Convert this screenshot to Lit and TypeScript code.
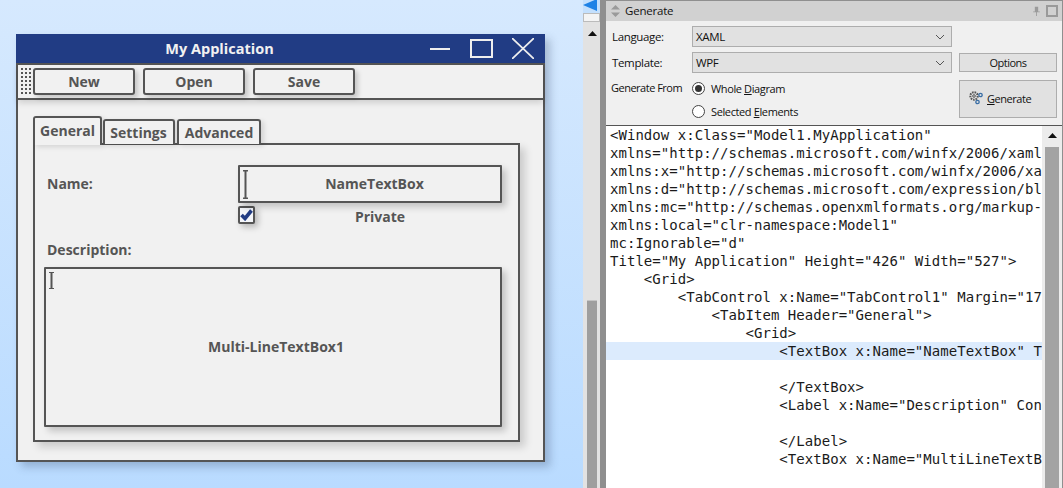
import { LitElement, html, css } from "lit";
import { customElement } from "lit/decorators.js";

const CODE = [
  `<Window x:Class="Model1.MyApplication"`,
  `xmlns="http://schemas.microsoft.com/winfx/2006/xaml/presentation"`,
  `xmlns:x="http://schemas.microsoft.com/winfx/2006/xaml"`,
  `xmlns:d="http://schemas.microsoft.com/expression/blend/2008"`,
  `xmlns:mc="http://schemas.openxmlformats.org/markup-compatibility/2006"`,
  `xmlns:local="clr-namespace:Model1"`,
  `mc:Ignorable="d"`,
  `Title="My Application" Height="426" Width="527">`,
  `    <Grid>`,
  `        <TabControl x:Name="TabControl1" Margin="17,10,10,10">`,
  `            <TabItem Header="General">`,
  `                <Grid>`,
  `                    <TextBox x:Name="NameTextBox" Text="NameTextBox">`,
  ``,
  `                    </TextBox>`,
  `                    <Label x:Name="Description" Content="Description:">`,
  ``,
  `                    </Label>`,
  `                    <TextBox x:Name="MultiLineTextBox1" Text="Multi-LineTextBox1">`,
];

@customElement("app-root")
export class AppRoot extends LitElement {
  static styles = css`
    :host { display: flex; width: 1063px; height: 488px; overflow: hidden; background: #fff; }
    .canvas { width: 583px; height: 488px; box-sizing: border-box; padding: 34px 0 0 16px;
      background: linear-gradient(180deg, #d6e9fe 0%, #b9dbff 100%); flex: none; }
    .win { width: 529px; height: 428px; box-sizing: border-box; background: #f1f1f1;
      box-shadow: 5px 5px 8px rgba(60,80,110,.3); display: flex; flex-direction: column;
      font-family: "Open Sans", sans-serif; font-weight: 700; color: #555; font-size: 14px; }
    .title { height: 29px; background: #213c84; color: #f1f1f1; display: flex; align-items: center; flex: none; }
    .title span { width: 407px; text-align: center; font-size: 14.5px; }
    .ctrl { display: flex; align-items: center; margin-left: 7px; }
    .ctrl svg { display: block; }
    .ctrl .max { margin-left: 20px; }
    .ctrl .close { margin-left: 19px; }
    .body { flex: 1; border: 2px solid #555; min-height: 0; display: flex; flex-direction: column; }
    .toolbar { height: 33px; flex: none; border-bottom: 2px solid #555; display: flex; align-items: center;
      box-shadow: 0 3px 6px rgba(0,0,0,.14); gap: 8px; position: relative; padding-left: 15px; }
    .grip { position: absolute; left: 1px; top: 3px; width: 12px; height: 28px;
      background-image: conic-gradient(#555 25%, transparent 0); background-size: 4px 4px; }
    .btn { width: 102px; height: 27px; box-sizing: border-box; border: 2px solid #555; border-radius: 3px;
      display: flex; align-items: center; justify-content: center; background: #f1f1f1;
      box-shadow: 3px 3px 5px rgba(0,0,0,.18); }
    .content { padding: 16px 0 0 15px; display: flex; flex-direction: column; flex: 1; }
    .tabs { display: flex; align-items: flex-end; height: 28px; gap: 1px; position: relative; z-index: 1; }
    .tab { height: 25px; box-sizing: border-box; border: 2px solid #555; border-bottom: 0; border-radius: 3px 3px 0 0;
      display: flex; align-items: center; justify-content: center; background: #f1f1f1;
      box-shadow: 3px 2px 5px rgba(0,0,0,.12); }
    .tab.general { width: 69px; height: 29px; margin-bottom: -1px; padding-bottom: 3px; }
    .tab.settings { width: 72px; padding-right: 1px; }
    .tab.advanced { width: 84px; margin-left: 1px; }
    .panel { width: 487px; height: 299px; box-sizing: border-box; border: 2px solid #555; margin-top: -1px; background: #f1f1f1;
      box-shadow: 5px 5px 8px rgba(0,0,0,.16); display: grid; grid-template-columns: 194px 264px; padding: 20px 0 0 9px;
      grid-template-rows: 38px 24px 40px 160px; align-content: start; }
    .lbl { padding: 0 0 2px 3px; display: flex; align-items: center; }
    .tb { border: 2px solid #555; box-sizing: border-box; border-radius: 1px; position: relative; display: flex;
      align-items: center; justify-content: center; box-shadow: 4px 4px 7px rgba(0,0,0,.2); background: #f1f1f1; }
    .name { padding: 0 0 2px 9px; }
    .caret { position: absolute; left: 3px; top: 3px; width: 5px; height: 29px; }
    .multi { grid-column: 1 / 3; padding: 0 0 2px 6px; }
    .multi .caret { height: 17px; }
    .chk { display: flex; align-items: center; }
    .box { width: 17px; height: 18px; box-sizing: border-box; border: 2px solid #555; border-radius: 2px; background: #f4f6fa;
      box-shadow: 3px 3px 6px rgba(0,0,0,.25); display: flex; align-items: center; justify-content: center; flex: none; }
    .chk span { width: 250px; text-align: center; padding: 2px 0 0 3px; box-sizing: border-box; }
    .desc { grid-column: 1 / 3; padding: 5px 0 0 3px; display: flex; align-items: center; }

    .strip { width: 17px; height: 488px; flex: none; background: #e2e2e2; display: flex; flex-direction: column; }
    .tag { height: 13px; background: #c4e0fd; flex: none; }
    .tag svg { display: block; }
    .slot { height: 9px; width: 17px; box-sizing: border-box; background: #f4f4f4; border: 1px solid #bbb; flex: none; }
    .up { margin: 9px 0 0 5px; flex: none; }
    .thumb { width: 10px; background: #9e9e9e; margin: 264px 0 0 4px; flex: 1; border-top: 1px solid #c4c4c4; }
    .right { flex: 1; min-width: 0; display: flex; flex-direction: column; border-left: 6px solid #8f8f8f; background: #f0f0f0;
      border-top: 1px solid #8f8f8f; border-right: 1px solid #8f8f8f; font-family: "Open Sans", sans-serif; font-size: 11.5px; color: #111; }
    .hdr { height: 20px; background: #d1d1d1; display: flex; align-items: center; padding: 0 4px 2px 5px; box-sizing: border-box; gap: 5px; flex: none; letter-spacing: -.2px; }
    .hdr .t { flex: 1; }
    .hdr svg { display: block; margin-top: 2px; }
    .form { height: 104px; flex: none; box-sizing: border-box; display: grid; letter-spacing: -.35px;
      grid-template-columns: 80px 260px 98px; grid-template-rows: 26px 25px 23px 22px;
      padding: 5px 0 0 6px; align-content: start; }
    .form .l { display: flex; align-items: center; height: 21px; white-space: nowrap; }
    .form .from { font-size: 11px; letter-spacing: -.5px; margin-left: -1px; }
    .sel { height: 21px; width: 260px; box-sizing: border-box; background: #e1e1e1; border: 1px solid #adadad; display: flex;
      align-items: center; padding: 0 6px 0 3px; justify-content: space-between; }
    .radio { display: flex; align-items: center; gap: 6px; height: 22px; white-space: nowrap; font-size: 11px; letter-spacing: -.38px; }
    .r { width: 13px; height: 13px; border-radius: 50%; box-sizing: border-box; border: 1px solid #444; background: #fff;
      display: flex; align-items: center; justify-content: center; flex: none; }
    .r i { width: 7px; height: 7px; border-radius: 50%; background: #333; display: block; }
    .wbtn { background: #e1e1e1; border: 1px solid #adadad; box-sizing: border-box; display: flex; align-items: center; justify-content: center; width: 98px; margin-left: 7px; }
    .options { height: 19px; align-self: start; margin-top: 1px; font-size: 11px; letter-spacing: -.5px; }
    .gen { height: 38px; grid-column: 3; grid-row: 3 / 5; gap: 3px; align-self: start; margin-top: 3px; justify-content: flex-start; padding: 0 0 2px 9px; font-size: 11px; letter-spacing: -.45px; }
    .sel2 { grid-column: 2; grid-row: 4; }
    u { text-underline-offset: 1px; }
    .code-wrap { flex: 1; min-height: 0; display: flex; background: #fff; border-top: 1px solid #555; }
    .code { flex: 1; min-width: 0; overflow: hidden; font-family: "DejaVu Sans Mono", monospace; font-size: 14px; line-height: 18px; color: #1a1a1a; }
    .ln { height: 18px; white-space: pre; padding-left: 4px; letter-spacing: .04px; }
    .ln.hl { background: #dcebfd; }
    .sb { width: 20px; flex: none; background: #ececec; display: flex; flex-direction: column; align-items: center; }
    .sb svg { margin-top: 7px; }
    .sb div { width: 14px; flex: 1; margin-top: 9px; background: #a3a3a3; }
  `;

  render() {
    const caret = html`<svg class="caret" viewBox="0 0 5 29" preserveAspectRatio="none"><path d="M0 .8h5M0 28.2h5" stroke="#555" stroke-width="1.6" fill="none"/><path d="M2.5 0v29" stroke="#555" stroke-width="2" fill="none"/></svg>`;
    return html`
      <div class="canvas">
        <div class="win">
          <div class="title">
            <span>My Application</span>
            <div class="ctrl">
              <svg width="20" height="20" viewBox="0 0 20 20"><path d="M0 10h20" stroke="#eee" stroke-width="2"/></svg>
              <svg class="max" width="23" height="19" viewBox="0 0 23 19"><rect x="1" y="1" width="21" height="17" fill="none" stroke="#eee" stroke-width="2"/></svg>
              <svg class="close" width="22" height="21" viewBox="0 0 22 21"><path d="M0 0L22 21M22 0L0 21" stroke="#eee" stroke-width="1.7"/></svg>
            </div>
          </div>
          <div class="body">
            <div class="toolbar">
              <div class="grip"></div>
              <div class="btn">New</div><div class="btn">Open</div><div class="btn">Save</div>
            </div>
            <div class="content">
              <div class="tabs">
                <div class="tab general">General</div>
                <div class="tab settings">Settings</div>
                <div class="tab advanced">Advanced</div>
              </div>
              <div class="panel">
                <div class="lbl">Name:</div>
                <div class="tb name">${caret}NameTextBox</div>
                <div></div>
                <div class="chk"><div class="box"><svg width="13" height="12" viewBox="0 0 13 12"><path d="M1.5 6L5 9.5L11.5 1.5" fill="none" stroke="#213c84" stroke-width="3.6"/></svg></div><span>Private</span></div>
                <div class="desc">Description:</div>
                <div class="tb multi">${caret}Multi-LineTextBox1</div>
              </div>
            </div>
          </div>
        </div>
      </div>
      <div class="strip">
        <div class="tag"><svg width="17" height="13" viewBox="0 0 17 13"><path d="M14 -1V11L0 5Z" fill="#1e82e6"/></svg></div>
        <div class="slot"></div>
        <svg class="up" width="9" height="5" viewBox="0 0 9 5"><path d="M4.5 0L9 5H0Z" fill="#111"/></svg>
        <div class="thumb"></div>
      </div>
      <div class="right">
        <div class="hdr">
          <svg width="9" height="12" viewBox="0 0 9 12"><path d="M4.5 0L9 4.5H0ZM0 7.5H9L4.5 12Z" fill="#9a9a9a"/></svg>
          <span class="t">Generate</span>
          <svg width="9" height="10" viewBox="0 0 9 12"><path d="M2.5 1H6.5V6.5H8.5V7.5H5V12H4V7.5H.5V6.5H2.5Z" fill="#9a9a9a"/></svg>
          <svg width="12" height="12" viewBox="0 0 12 12"><rect x="1" y="1" width="10" height="10" fill="none" stroke="#9a9a9a" stroke-width="2"/></svg>
        </div>
        <div class="form">
          <div class="l">Language:</div>
          <div class="sel"><span>XAML</span><svg width="10" height="6" viewBox="0 0 10 6"><path d="M1 1L5 5L9 1" fill="none" stroke="#555"/></svg></div>
          <div></div>
          <div class="l">Template:</div>
          <div class="sel"><span>WPF</span><svg width="10" height="6" viewBox="0 0 10 6"><path d="M1 1L5 5L9 1" fill="none" stroke="#555"/></svg></div>
          <div class="wbtn options">Options</div>
          <div class="l from">Generate From</div>
          <div class="radio"><div class="r"><i></i></div><span>Whole <u>D</u>iagram</span></div>
          <div class="wbtn gen">
            <svg width="15" height="16" viewBox="0 0 15 16"><circle cx="5" cy="6" r="3.7" fill="none" stroke="#555" stroke-width="2" stroke-dasharray="1.6 .9"/><circle cx="5" cy="6" r="1.3" fill="none" stroke="#555"/><circle cx="11.5" cy="5" r="1.7" fill="none" stroke="#3a6ea5" stroke-width="1.3"/><circle cx="8.5" cy="12" r="1.7" fill="none" stroke="#3a6ea5" stroke-width="1.3"/></svg>
            <span><u>G</u>enerate</span>
          </div>
          <div class="radio sel2"><div class="r"></div><span>Selected <u>E</u>lements</span></div>
        </div>
        <div class="code-wrap">
          <div class="code">
            ${CODE.map((l, i) => html`<div class="ln ${i === 12 ? "hl" : ""}">${l}</div>`)}
          </div>
          <div class="sb">
            <svg width="9" height="5" viewBox="0 0 9 5"><path d="M4.5 0L9 5H0Z" fill="#111"/></svg>
            <div></div>
          </div>
        </div>
      </div>
    `;
  }
}
